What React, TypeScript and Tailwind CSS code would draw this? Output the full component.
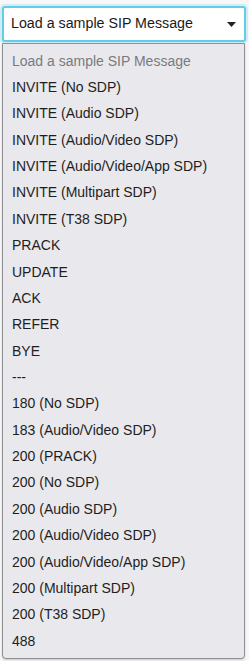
const options = [
  "INVITE (No SDP)",
  "INVITE (Audio SDP)",
  "INVITE (Audio/Video SDP)",
  "INVITE (Audio/Video/App SDP)",
  "INVITE (Multipart SDP)",
  "INVITE (T38 SDP)",
  "PRACK",
  "UPDATE",
  "ACK",
  "REFER",
  "BYE",
  "---",
  "180 (No SDP)",
  "183 (Audio/Video SDP)",
  "200 (PRACK)",
  "200 (No SDP)",
  "200 (Audio SDP)",
  "200 (Audio/Video SDP)",
  "200 (Audio/Video/App SDP)",
  "200 (Multipart SDP)",
  "200 (T38 SDP)",
  "488",
];

export default function App() {
  return (
    <div
      className="w-[249px] h-[661px] overflow-hidden bg-[#f7f7f8] pt-[6px] pl-[2px] pr-[3px]"
      style={{ fontFamily: '"Liberation Sans", Arial, sans-serif' }}
    >
      {/* select */}
      <div className="h-[36px] flex items-center justify-between rounded-[3px] border-2 border-[#62cde8] bg-white pl-[7px] pr-[8px] shadow-[0_0_0_2px_rgba(98,205,232,0.25)]">
        <span className="text-[14.25px] text-[#1a1a1a]">Load a sample SIP Message</span>
        <svg width="9" height="5" viewBox="0 0 9 5" className="mt-[1px]">
          <path d="M0 0h9L4.5 5z" fill="#222" />
        </svg>
      </div>

      {/* open list */}
      <div className="mt-[1px] mr-[1px] rounded-b-[4px] border border-[#8f8f94] bg-[#e9e9ed] py-[4px] shadow-[0_1px_2px_rgba(0,0,0,0.2)]">
        <div className="h-[26.36px] flex items-center pl-[9px] text-[14px] text-[#7a7a7e]">
          Load a sample SIP Message
        </div>
        {options.map((o) => (
          <div key={o} className="h-[26.36px] flex items-center pl-[9px] text-[14px] text-[#1e1e1e]">
            {o}
          </div>
        ))}
      </div>
    </div>
  );
}
